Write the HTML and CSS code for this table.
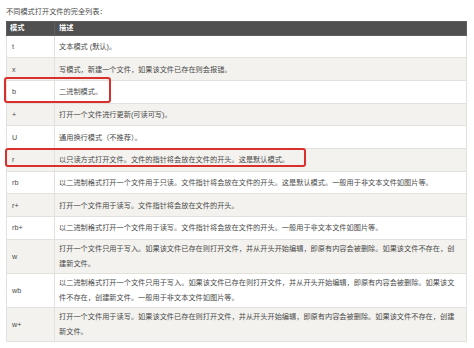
FILE: index.html
```html
<!DOCTYPE html>
<html lang="zh-CN">
<head>
<meta charset="utf-8">
<title>模式列表</title>
<link rel="stylesheet" href="styles.css">
</head>
<body>
<p class="intro">不同模式打开文件的完全列表：</p>
<div class="table-wrap">
  <table class="modes">
    <thead>
      <tr><th class="c1">模式</th><th class="c2">描述</th></tr>
    </thead>
    <tbody>
      <tr><td class="c1">t</td><td class="c2">文本模式 (默认)。</td></tr>
      <tr><td class="c1">x</td><td class="c2">写模式，新建一个文件，如果该文件已存在则会报错。</td></tr>
      <tr><td class="c1">b</td><td class="c2">二进制模式。</td></tr>
      <tr><td class="c1">+</td><td class="c2">打开一个文件进行更新(可读可写)。</td></tr>
      <tr><td class="c1">U</td><td class="c2">通用换行模式（不推荐）。</td></tr>
      <tr><td class="c1">r</td><td class="c2">以只读方式打开文件。文件的指针将会放在文件的开头。这是默认模式。</td></tr>
      <tr><td class="c1">rb</td><td class="c2">以二进制格式打开一个文件用于只读。文件指针将会放在文件的开头。这是默认模式。一般用于非文本文件如图片等。</td></tr>
      <tr><td class="c1">r+</td><td class="c2">打开一个文件用于读写。文件指针将会放在文件的开头。</td></tr>
      <tr><td class="c1">rb+</td><td class="c2">以二进制格式打开一个文件用于读写。文件指针将会放在文件的开头。一般用于非文本文件如图片等。</td></tr>
      <tr><td class="c1">w</td><td class="c2">打开一个文件只用于写入。如果该文件已存在则打开文件，并从开头开始编辑，即原有内容会被删除。如果该文件不存在，创建新文件。</td></tr>
      <tr><td class="c1">wb</td><td class="c2">以二进制格式打开一个文件只用于写入。如果该文件已存在则打开文件，并从开头开始编辑，即原有内容会被删除。如果该文件不存在，创建新文件。一般用于非文本文件如图片等。</td></tr>
      <tr><td class="c1">w+</td><td class="c2">打开一个文件用于读写。如果该文件已存在则打开文件，并从开头开始编辑，即原有内容会被删除。如果该文件不存在，创建新文件。</td></tr>
    </tbody>
  </table>
  <span class="mark mark-b"></span>
  <span class="mark mark-r"></span>
</div>
</body>
</html>
```

FILE: styles.css
```css
html, body {
  margin: 0;
  padding: 0;
  background: #ffffff;
}
body {
  padding: 4px 6px 0 6px;
  font-family: "Liberation Sans", "Noto Sans CJK SC", sans-serif;
  font-size: 7.2px;
  color: #4a4a4a;
  overflow: hidden;
}
.intro {
  margin: 0 0 2px 0;
  line-height: 15px;
  height: 15px;
}
.table-wrap {
  position: relative;
  width: 461px;
}
.modes {
  width: 461px;
  border-collapse: collapse;
  table-layout: fixed;
}
.modes th {
  background: #505050;
  color: #ffffff;
  font-weight: bold;
  text-align: left;
  height: 12.5px;
  line-height: 12.5px;
  padding: 0 0 0 3px;
  border: 1px solid #5e5e5e;
}
.modes th.c2 {
  padding-left: 4px;
}
.modes .c1 {
  width: 44px;
}
.modes td {
  height: 22.7px;
  line-height: 15px;
  padding: 1.5px 6px 1.5px 4px;
  border: 1px solid #e3e1dc;
  vertical-align: middle;
  box-sizing: border-box;
}
.modes td.c1 {
  padding-left: 5px;
}
.modes tbody tr:nth-child(even) td {
  background: #f3f2ee;
}
.mark {
  position: absolute;
  border: 2px solid #d9302c;
  border-radius: 3px;
  box-sizing: border-box;
}
.mark-b {
  left: -2px;
  top: 56px;
  width: 107px;
  height: 26px;
}
.mark-r {
  left: -1px;
  top: 127px;
  width: 301px;
  height: 19px;
}
```
